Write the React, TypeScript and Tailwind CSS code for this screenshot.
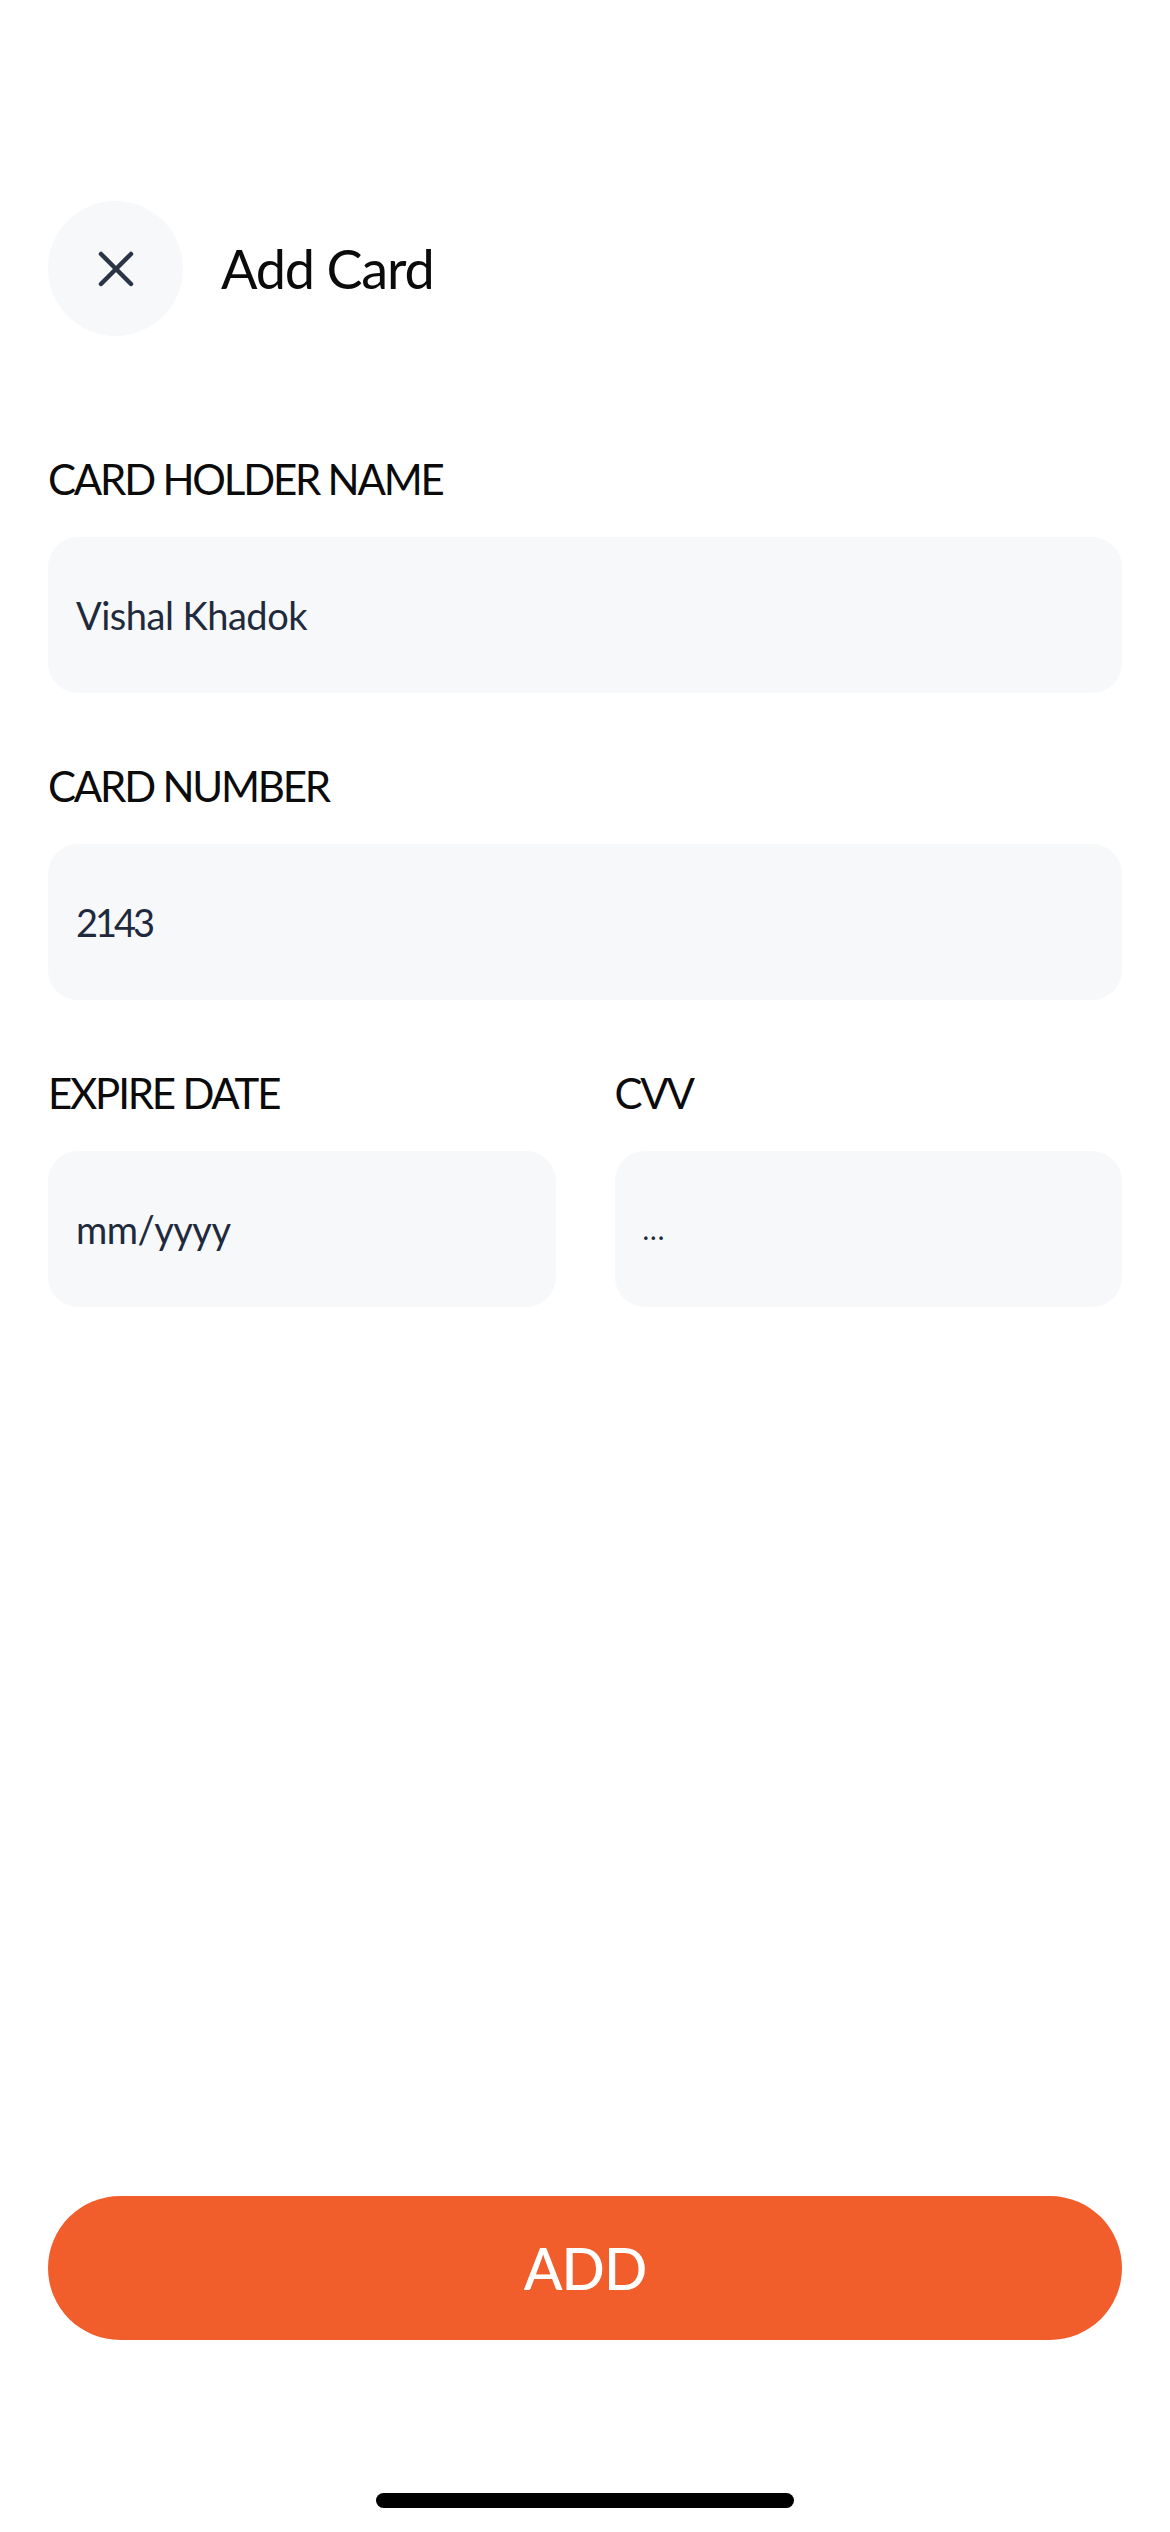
import React from "react";

const font = { fontFamily: "Lato, 'Noto Sans', sans-serif" };

function Field({
  label,
  value,
  small,
  digits,
}: {
  label: string;
  value: string;
  small?: boolean;
  digits?: boolean;
}) {
  return (
    <div className="flex flex-col">
      <label className="text-[42px] leading-none text-[#0b0b0b] tracking-[-2.2px]">
        {label}
      </label>
      <div className="mt-[37px] flex h-[156px] items-center rounded-[30px] bg-[#f7f8fa] pl-[28px]">
        {small ? (
          <span className="text-[28px] leading-none text-[#1f2a3d] tracking-[1px]">
            {value}
          </span>
        ) : digits ? (
          <span className="text-[38px] leading-none text-[#1f2a3d] tracking-[-3px]">
            {value}
          </span>
        ) : (
          <span className="text-[38px] leading-none text-[#1f2a3d] tracking-[-0.5px]">
            {value}
          </span>
        )}
      </div>
    </div>
  );
}

export default function App() {
  return (
    <div
      className="flex min-h-screen w-full flex-col bg-white px-12"
      style={font}
    >
      {/* Header */}
      <div className="flex items-center gap-[38px] pt-[201px]">
        <button className="flex h-[135px] w-[135px] items-center justify-center rounded-full bg-[#f7f8fa]">
          <svg width="36" height="36" viewBox="0 0 36 36" fill="none">
            <path
              d="M3 3L33 33M33 3L3 33"
              stroke="#2a3447"
              strokeWidth="4.5"
              strokeLinecap="round"
            />
          </svg>
        </button>
        <h1 className="text-[54px] leading-none text-[#0b0b0b] tracking-[-1.2px]">
          Add Card
        </h1>
      </div>

      {/* Form */}
      <div className="mt-[122px] flex flex-col gap-[72px]">
        <Field label="CARD HOLDER NAME" value="Vishal Khadok" />
        <Field label="CARD NUMBER" value="2143" digits />
        <div className="grid grid-cols-2 gap-[59px]">
          <Field label="EXPIRE DATE" value="mm/yyyy" />
          <Field label="CVV" value="..." small />
        </div>
      </div>

      {/* Submit */}
      <button className="mt-auto flex h-[144px] w-full items-center justify-center rounded-full bg-[#f25e2b]">
        <span className="text-[57px] font-medium leading-none text-white tracking-[-1px]">
          ADD
        </span>
      </button>

      {/* Home indicator */}
      <div className="flex justify-center pt-[153px] pb-[24px]">
        <div className="h-[15px] w-[418px] rounded-full bg-black" />
      </div>
    </div>
  );
}
